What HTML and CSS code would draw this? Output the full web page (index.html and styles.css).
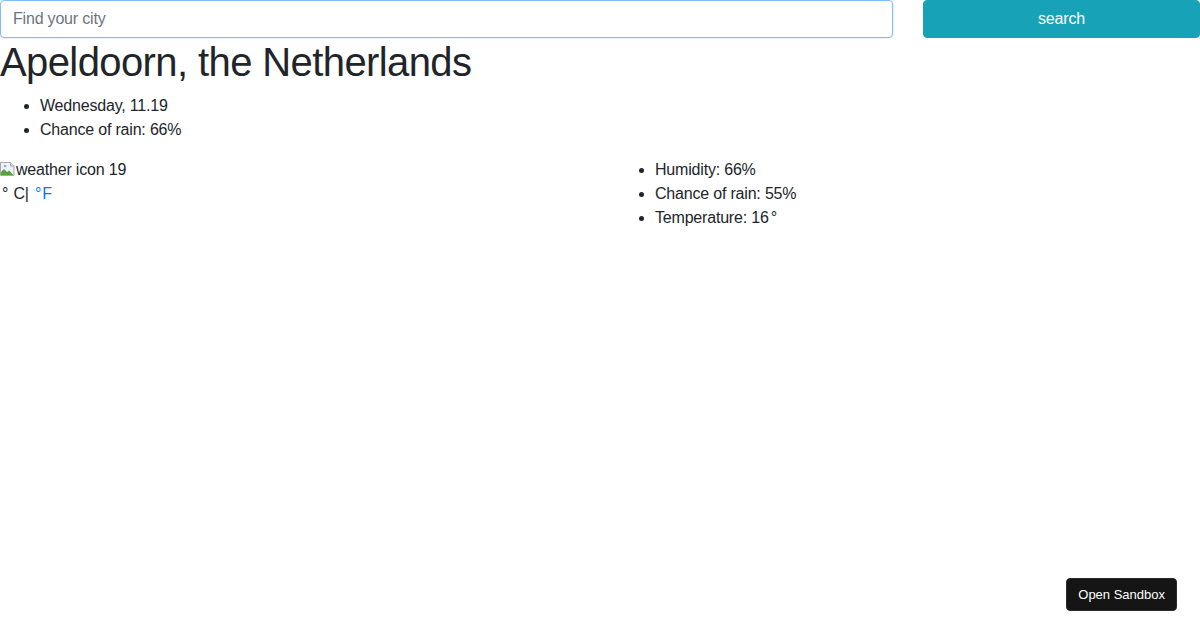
FILE: index.html
```html
<!DOCTYPE html>
<html>
  <head>
    <meta charset="utf-8">
    <meta name="viewport" content="width=device-width, initial-scale=1">
    <title>Weather</title>
    <link rel="stylesheet" href="styles.css">
  </head>
  <body>
    <form class="search">
      <input class="search-input" type="text" placeholder="Find your city">
      <button class="search-button" type="button">search</button>
    </form>

    <h1 class="city">Apeldoorn, the Netherlands</h1>
    <ul class="summary">
      <li>Wednesday, 11.19</li>
      <li>Chance of rain: 66%</li>
    </ul>

    <div class="current">
      <div class="current-main">
        <div class="current-temp">
          <span class="broken-img">
            <svg class="broken-icon" width="16" height="16" viewBox="0 0 16 16">
              <path d="M0.5 1.5h10l3.5 3.5v9.5h-13.5z" fill="#eef2f6" stroke="#a8a8a8"/>
              <path d="M10.5 1.5v3.5h3.5" fill="#ddd" stroke="#a8a8a8"/>
              <path d="M1 14v-3l3-3 3 3 2-1.5 4.5 4.5z" fill="#5aa33c"/>
              <circle cx="5" cy="5" r="1.3" fill="#8fb0d0"/>
            </svg>weather icon</span> 19
        </div>
        <div class="units"><span class="deg">°</span> C| <a href="#" class="unit-link"><span class="deg">°</span>F</a></div>
      </div>
      <ul class="details">
        <li>Humidity: 66%</li>
        <li>Chance of rain: 55%</li>
        <li>Temperature: 16<span class="deg">°</span></li>
      </ul>
    </div>

    <a href="#" class="sandbox">Open Sandbox</a>
  </body>
</html>
```

FILE: styles.css
```css
body {
  margin: 0;
  font-family: "Liberation Sans", Arial, sans-serif;
  font-size: 16px;
  line-height: 1.5;
  letter-spacing: -0.012em;
  color: #212529;
  background: #fff;
}

.search {
  display: grid;
  grid-template-columns: 1fr 277px;
  gap: 30px;
}

.search-input,
.search-button {
  font-family: inherit;
  font-size: 16px;
  line-height: 1.5;
  letter-spacing: inherit;
  height: 38px;
  box-sizing: border-box;
  border-radius: 4px;
}

.search-input {
  padding: 6px 12px;
  border: 1px solid #80bdff;
  color: #495057;
  box-shadow: 0 0 0 1px rgba(0, 123, 255, 0.08);
  outline: none;
}

.search-input::placeholder {
  color: #6c757d;
}

.search-button {
  border: 1px solid #17a2b8;
  background: #17a2b8;
  color: #fff;
  padding: 6px 12px;
}

.city {
  margin: 0 0 8px;
  font-size: 40px;
  font-weight: 500;
  line-height: 1.2;
  letter-spacing: -0.6px;
}

.summary,
.details {
  margin: 0 0 16px;
  padding-left: 40px;
}

.current {
  display: grid;
  grid-template-columns: 1fr 1fr;
}

.details {
  margin-left: 15px;
}

.broken-icon {
  vertical-align: -2px;
}

.deg {
  padding: 0 1px 0 2px;
}

.unit-link {
  color: #007bff;
  text-decoration: none;
}

.sandbox {
  position: fixed;
  right: 23px;
  bottom: 19px;
  padding: 6px 11px;
  background: #151515;
  color: #fff;
  font-size: 13px;
  line-height: 19px;
  letter-spacing: 0;
  border-radius: 4px;
  text-decoration: none;
  border: 1px solid #2b2b2b;
}
```
